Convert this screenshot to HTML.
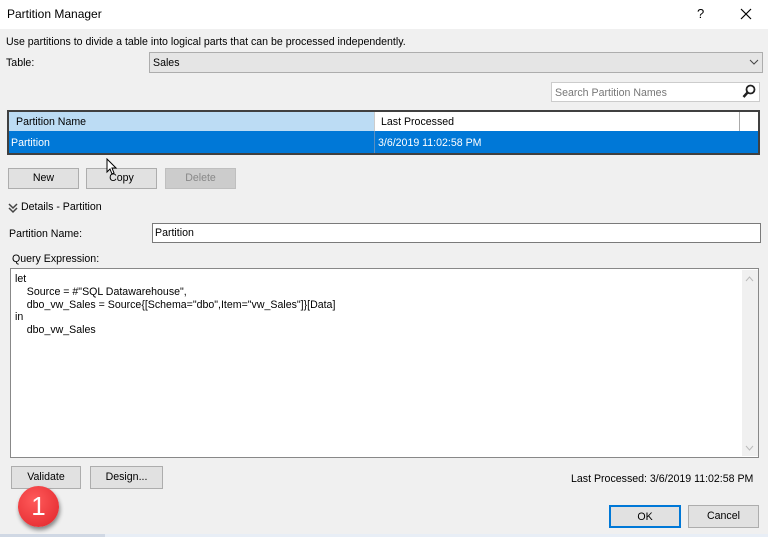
<!DOCTYPE html>
<html><head><style>
*{box-sizing:border-box;margin:0;padding:0}
body{width:768px;height:537px;background:#f0f0f0;font-family:"Liberation Sans",sans-serif;font-size:10.6px;color:#000;position:relative;overflow:hidden}
.a{position:absolute;white-space:nowrap}
.btn{position:absolute;background:#e1e1e1;border:1px solid #adadad;text-align:center;line-height:19px;font-size:10.6px}
.in{position:absolute;background:#fff;border:1px solid #7a7a7a}
</style></head><body>
<div class="a" style="left:0;top:0;width:768px;height:29px;background:#fff"></div>
<div class="a" style="left:7px;top:7px;font-size:12px">Partition Manager</div>
<div class="a" style="left:697px;top:6px;font-size:13px">?</div>
<svg class="a" style="left:740px;top:8px" width="12" height="12"><path d="M1 1L11 11M11 1L1 11" stroke="#000" stroke-width="1.2"/></svg>
<div class="a" style="left:6px;top:36px">Use partitions to divide a table into logical parts that can be processed independently.</div>
<div class="a" style="left:6px;top:57px">Table:</div>
<div class="a" style="left:149px;top:52px;width:614px;height:21px;background:#e5e5e5;border:1px solid #adadad"></div>
<div class="a" style="left:153px;top:57px">Sales</div>
<svg class="a" style="left:749px;top:59px" width="10" height="7"><path d="M1 1L5 5L9 1" stroke="#444" fill="none"/></svg>
<div class="in" style="left:551px;top:82px;width:209px;height:20px;border-color:#ccc"></div>
<div class="a" style="left:555px;top:87px;color:#777">Search Partition Names</div>
<svg class="a" style="left:742px;top:84px" width="14" height="15"><circle cx="8.5" cy="5.5" r="4" stroke="#222" stroke-width="1.8" fill="none"/><path d="M6 8L1.5 13" stroke="#222" stroke-width="2.5"/></svg>
<div class="a" style="left:7px;top:110px;width:753px;height:45px;border:2px solid #404040;background:#fff"></div>
<div class="a" style="left:9px;top:112px;width:365px;height:19px;background:#bcdcf4"></div>
<div class="a" style="left:374px;top:112px;width:1px;height:19px;background:#ccc"></div>
<div class="a" style="left:739px;top:112px;width:1px;height:41px;background:#aaa"></div>
<div class="a" style="left:16px;top:116px">Partition Name</div>
<div class="a" style="left:381px;top:116px">Last Processed</div>
<div class="a" style="left:9px;top:131px;width:749px;height:22px;background:#0078d7"></div>
<div class="a" style="left:374px;top:131px;width:1px;height:22px;background:#5a8fc0"></div>
<div class="a" style="left:11px;top:137px;color:#fff">Partition</div>
<div class="a" style="left:378px;top:137px;color:#fff">3/6/2019 11:02:58 PM</div>
<div class="btn" style="left:8px;top:168px;width:71px;height:21px">New</div>
<div class="btn" style="left:86px;top:168px;width:71px;height:21px">Copy</div>
<div class="btn" style="left:165px;top:168px;width:71px;height:21px;color:#888;background:#ccc;border-color:#bfbfbf">Delete</div>
<svg class="a" style="left:106px;top:158px" width="11" height="17"><path d="M1 1L1 14L4 11L6 16L8 15L6 10L10 10Z" fill="#fff" stroke="#000"/></svg>
<svg class="a" style="left:7px;top:202px" width="12" height="12"><path d="M2 2L6 6L10 2M2 6L6 10L10 6" stroke="#444" stroke-width="1.5" fill="none"/></svg>
<div class="a" style="left:21px;top:201px">Details - Partition</div>
<div class="a" style="left:9px;top:228px">Partition Name:</div>
<div class="in" style="left:152px;top:223px;width:609px;height:20px"></div>
<div class="a" style="left:155px;top:227px">Partition</div>
<div class="a" style="left:12px;top:253px">Query Expression:</div>
<div class="in" style="left:10px;top:268px;width:749px;height:190px;border-color:#888"></div>
<div class="a" style="left:15px;top:273px;line-height:12.8px;white-space:pre">let
    Source = #"SQL Datawarehouse",
    dbo_vw_Sales = Source{[Schema="dbo",Item="vw_Sales"]}[Data]
in
    dbo_vw_Sales</div>
<div class="a" style="left:742px;top:270px;width:16px;height:186px;background:#f0f0f0"></div>
<svg class="a" style="left:745px;top:276px" width="9" height="6"><path d="M1 5L4.5 1L8 5" stroke="#bbb" fill="none"/></svg>
<svg class="a" style="left:745px;top:445px" width="9" height="6"><path d="M1 1L4.5 5L8 1" stroke="#bbb" fill="none"/></svg>
<div class="btn" style="left:11px;top:466px;width:70px;height:23px;line-height:21px">Validate</div>
<div class="btn" style="left:90px;top:466px;width:73px;height:23px;line-height:21px">Design...</div>
<div class="a" style="left:571px;top:473px">Last Processed: 3/6/2019 11:02:58 PM</div>
<div class="btn" style="left:609px;top:505px;width:72px;height:23px;line-height:21px;border:2px solid #0078d7">OK</div>
<div class="btn" style="left:688px;top:505px;width:71px;height:23px;line-height:21px">Cancel</div>
<div class="a" style="left:18px;top:486px;width:41px;height:41px;border-radius:50%;background:radial-gradient(circle at 40% 35%,#ff5a5a,#e0242a);box-shadow:1px 3px 4px rgba(0,0,0,.45);color:#fff;font-size:26px;text-align:center;line-height:41px">1</div>
<div class="a" style="left:0;top:534px;width:768px;height:3px;background:#e8eef6"></div>
<div class="a" style="left:0;top:534px;width:105px;height:3px;background:#d0d8e4"></div>
</body></html>
